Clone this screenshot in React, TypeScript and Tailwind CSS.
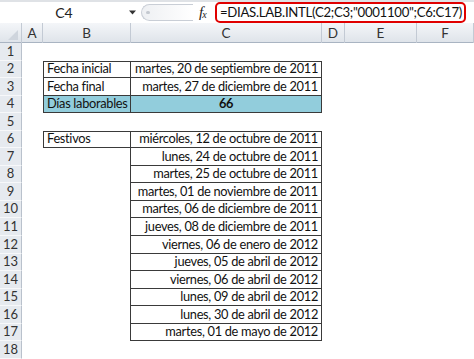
import React from "react";

const font = { fontFamily: "Lato, 'Open Sans', sans-serif" };

type Cell = {
  text?: string;
  align?: "left" | "right" | "center";
  bold?: boolean;
  fill?: boolean;
  bt?: boolean;
  bb?: boolean;
  bl?: boolean;
  br?: boolean;
};

const festivos = [
  "miércoles, 12 de octubre de 2011",
  "lunes, 24 de octubre de 2011",
  "martes, 25 de octubre de 2011",
  "martes, 01 de noviembre de 2011",
  "martes, 06 de diciembre de 2011",
  "jueves, 08 de diciembre de 2011",
  "viernes, 06 de enero de 2012",
  "jueves, 05 de abril de 2012",
  "viernes, 06 de abril de 2012",
  "lunes, 09 de abril de 2012",
  "lunes, 30 de abril de 2012",
  "martes, 01 de mayo de 2012",
];

function rowCells(r: number): { b: Cell; c: Cell } {
  if (r === 2)
    return {
      b: { text: "Fecha inicial", align: "left", bt: true, bl: true, bb: true, br: true },
      c: { text: "martes, 20 de septiembre de 2011", align: "right", bt: true, bb: true, br: true },
    };
  if (r === 3)
    return {
      b: { text: "Fecha final", align: "left", bl: true, bb: true, br: true },
      c: { text: "martes, 27 de diciembre de 2011", align: "right", bb: true, br: true },
    };
  if (r === 4)
    return {
      b: { text: "Días laborables", align: "left", bl: true, bb: true, br: true, fill: true },
      c: { text: "66", align: "center", bold: true, bb: true, br: true, fill: true },
    };
  if (r === 6)
    return {
      b: { text: "Festivos", align: "left", bt: true, bl: true, bb: true, br: true },
      c: { text: festivos[0], align: "right", bt: true, bb: true, br: true },
    };
  if (r >= 7 && r <= 17)
    return {
      b: { br: true },
      c: { text: festivos[r - 6], align: "right", bb: true, br: true },
    };
  return { b: {}, c: {} };
}

function DataCell({ cell }: { cell: Cell }) {
  const cls = [
    "min-w-0 flex items-end overflow-hidden whitespace-nowrap pb-[1px] text-[12.8px] tracking-[-0.3px] leading-[15px] text-[#111]",
    cell.align === "right" ? "justify-end pr-[3px]" : cell.align === "center" ? "justify-center" : "justify-start pl-[3px]",
    cell.bold ? "font-bold" : "",
    cell.fill ? "bg-[#92cddc]" : "",
    cell.bt ? "border-t border-t-[#3a3a3a]" : "",
    cell.bb ? "border-b border-b-[#3a3a3a]" : "",
    cell.bl ? "border-l border-l-[#3a3a3a]" : "",
    cell.br ? "border-r border-r-[#3a3a3a]" : "",
  ].join(" ");
  return <div className={cls}>{cell.text}</div>;
}

export default function App() {
  const rows = Array.from({ length: 18 }, (_, i) => i + 1);
  return (
    <div className="w-[474px] h-[359px] overflow-hidden bg-white" style={font}>
      {/* formula bar */}
      <div className="h-[23px] flex items-center border-t-2 border-t-[#dfe2e6] bg-white relative">
        <div className="w-[128px] text-center text-[14px] text-[#222]">C4</div>
        <svg width="7" height="5" viewBox="0 0 7 5" className="ml-[1px]">
          <path d="M0 0.5 L7 0.5 L3.5 4.5 Z" fill="#333" />
        </svg>
        <div className="ml-[5px] w-[52px] h-[17px] rounded-l-full border-l border-t border-b border-[#c9ced6] bg-gradient-to-r from-[#eef0f3] to-white flex items-center">
          <div className="ml-[4px] w-[4px] h-[3px] rounded-full bg-[#c4c9d0]" />
        </div>
        <div className="ml-[6px] w-[10px] flex items-end text-[#222]" style={{ fontFamily: "'Liberation Serif', serif" }}>
          <span className="italic text-[15px] leading-none">f</span>
          <span className="italic text-[10px] leading-none -ml-[1px]">x</span>
        </div>
        <div className="ml-[6px] w-[251px] h-[21px] border-2 border-[#e00000] rounded-[5px] flex items-center pl-[3px] text-[13.2px] tracking-[-0.3px] text-[#111] whitespace-nowrap overflow-hidden">
          =DIAS.LAB.INTL(C2;C3;"0001100";C6:C17)
        </div>
      </div>
      {/* column headers */}
      <div className="grid grid-cols-[22px_21px_88px_191px_23px_72px_1fr] h-[20px] bg-gradient-to-b from-[#f4f6f9] to-[#dfe4ea] border-b border-b-[#a9b4c2] text-[13.5px] text-[#333]">
        <div className="relative border-r border-r-[#c3cad4]">
          <svg width="10" height="10" viewBox="0 0 10 10" className="absolute right-[3px] bottom-[3px]">
            <path d="M10 0 L10 10 L0 10 Z" fill="#cfd5dd" />
          </svg>
        </div>
        {["A", "B", "C", "D", "E", "F"].map((l) => (
          <div key={l} className="flex items-center justify-center border-r border-r-[#c3cad4]">
            {l}
          </div>
        ))}
      </div>
      {/* body */}
      <div className="grid grid-cols-[22px_21px_88px_191px_23px_72px_1fr] grid-rows-[repeat(18,17.55px)]">
        {rows.map((r) => {
          const { b, c } = rowCells(r);
          return (
            <React.Fragment key={r}>
              <div className="flex items-center justify-center bg-[#e6eaef] border-b border-b-[#f7f8fa] border-r border-r-[#b9c1cc] text-[13px] text-[#333]">
                {r}
              </div>
              <div />
              <DataCell cell={b} />
              <DataCell cell={c} />
              <div />
              <div />
              <div />
            </React.Fragment>
          );
        })}
      </div>
    </div>
  );
}
